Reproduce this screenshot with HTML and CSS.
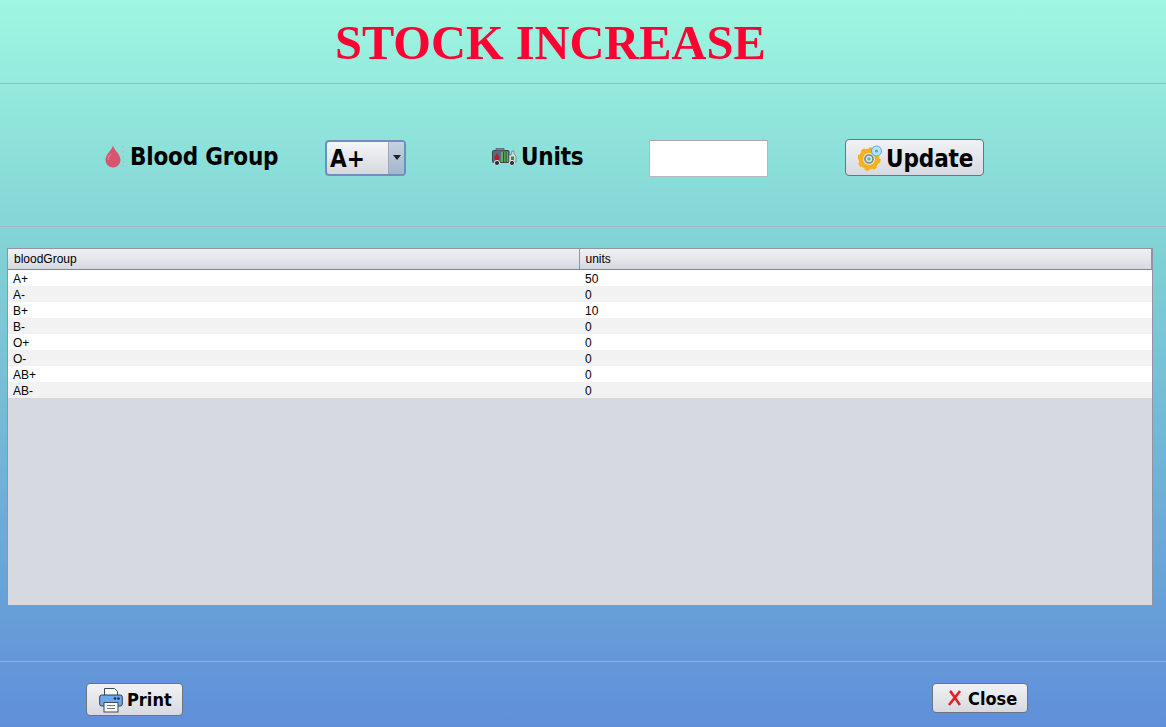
FILE: index.html
```html
<!DOCTYPE html>
<html lang="en">
<head>
<meta charset="utf-8">
<title>Stock Increase</title>
<link rel="stylesheet" href="styles.css">
</head>
<body>
<div class="frame">
  <header class="head"><h1 class="title">STOCK INCREASE</h1></header>
  <section class="controls">
    <div class="field field-group">
      <svg class="ico-drop" width="26" height="26" viewBox="0 0 26 26"><path d="M8 1.500C6.500 7 .5 10 .5 16a7.500 7.500 0 0 0 15 0C15.500 10 9.500 7 8 1.500Z" fill="#d9546f"/><path d="M3 16c0-2 1-4 3-6" stroke="#e98a9c" fill="none"/><g fill="#a9c9c4"><rect x="17" y="2" width="2" height="2"/><rect x="17" y="7" width="2" height="2"/><rect x="17" y="12" width="2" height="2"/><rect x="17" y="17" width="2" height="2"/><rect x="17" y="21" width="2" height="2"/></g></svg>
      <span class="label">Blood Group</span>
    </div>
    <div class="combo"><span class="combo-val">A+</span><span class="combo-arrow"><svg width="8" height="5" viewBox="0 0 8 5"><path d="M0 0h8L4 5Z" fill="#222"/></svg></span></div>
    <div class="field field-units">
      <svg class="ico-truck" width="25" height="18" viewBox="0 0 25 18"><rect x=".5" y="2.500" width="16.500" height="12" rx="1" fill="#5c6a7a" stroke="#3c4652"/><rect x="4" y=".5" width="8" height="2" fill="#78848f" stroke="#48525c" stroke-width=".6"/><path d="M5 5C4 7 2.500 8.500 2.500 10a2.500 2.500 0 0 0 5 0C7.500 8.500 6 7 5 5Z" fill="#b01e2a"/><rect x="9" y="4" width="7" height="10" fill="#5fb060"/><rect x="11" y="4" width="1.200" height="10" fill="#23602f"/><rect x="13.500" y="4" width="1.200" height="10" fill="#23602f"/><path d="M17 7h2l1-4h2v3l2 2v6h-7Z" fill="#d6dcdc" stroke="#59636a" stroke-width=".6"/><rect x="19" y="8.500" width="3" height="4" fill="#2f8a4e"/><circle cx="5" cy="15" r="2.600" fill="#2e3338" stroke="#e2e5e5"/><circle cx="20" cy="15" r="2.600" fill="#2e3338" stroke="#e2e5e5"/></svg>
      <span class="label">Units</span>
    </div>
    <div class="text-input"></div>
    <button class="btn btn-update" type="button">
      <svg width="25" height="26" viewBox="0 0 25 26"><circle cx="11" cy="14" r="8" fill="none" stroke="#f5b21d" stroke-width="5"/><circle cx="11" cy="14" r="10.500" fill="none" stroke="#f5b21d" stroke-width="2.500" stroke-dasharray="4 4.200"/><circle cx="11" cy="14" r="6" fill="#e4e6e4"/><circle cx="11" cy="14" r="4" fill="none" stroke="#7f8a86" stroke-width="1.700"/><circle cx="11" cy="14" r="1.700" fill="#3cc2a8"/><circle cx="18.500" cy="6" r="5" fill="#b8e2f6" stroke="#4eabe0"/><circle cx="18.500" cy="6" r="1.600" fill="#4eabe0"/></svg>
      <span>Update</span>
    </button>
  </section>
  <section class="grid-wrap">
    <div class="grid">
      <table class="tbl">
        <thead><tr><th class="col-a">bloodGroup</th><th>units</th></tr></thead>
        <tbody>
          <tr><td>A+</td><td>50</td></tr>
          <tr><td>A-</td><td>0</td></tr>
          <tr><td>B+</td><td>10</td></tr>
          <tr><td>B-</td><td>0</td></tr>
          <tr><td>O+</td><td>0</td></tr>
          <tr><td>O-</td><td>0</td></tr>
          <tr><td>AB+</td><td>0</td></tr>
          <tr><td>AB-</td><td>0</td></tr>
        </tbody>
      </table>
    </div>
  </section>
  <footer class="foot">
    <button class="btn btn-print" type="button">
      <svg width="24" height="26" viewBox="0 0 24 26"><path d="M5.500 1.500h10l3 3V10h-13Z" fill="#f6f6f2" stroke="#3f4a55"/><rect x=".7" y="8" width="22.600" height="11" rx="2" fill="#6ea8ea" stroke="#33404f"/><circle cx="16" cy="11.500" r="1.300" fill="#1f2e44"/><circle cx="19.500" cy="11.500" r="1.300" fill="#1f2e44"/><rect x="5" y="15.500" width="14" height="9.500" fill="#f6f6f2" stroke="#3f4a55"/><path d="M8 18.500h8M8 21.500h8" stroke="#6c7680"/></svg>
      <span>Print</span>
    </button>
    <button class="btn btn-close" type="button">
      <svg width="14" height="16" viewBox="0 0 14 16"><path d="M2 1c3 3 6 9 10 14M12 1C9 5 5 10 1 15" stroke="#ee1c25" stroke-width="2.600" fill="none"/></svg>
      <span>Close</span>
    </button>
  </footer>
</div>
</body>
</html>
```
FILE: styles.css
```css
* { box-sizing: border-box; }
html, body { margin: 0; height: 100%; }
body { overflow: hidden; }
.frame {
  width: 1166px;
  height: 727px;
  display: flex;
  flex-direction: column;
  background: linear-gradient(180deg, #9ff7e0 0%, #7fd0d5 36%, #5f8fd9 100%);
  font-family: "DejaVu Sans", sans-serif;
}
.head {
  height: 84px;
  border-bottom: 1px solid #85c4c6;
  padding-left: 335px;
  flex: none;
}
.title {
  margin: 0;
  padding-top: 15px;
  font: bold 48.400px/56px "Liberation Serif", serif;
  color: #ff0033;
}
.controls {
  height: 143px;
  flex: none;
  border-bottom: 1px solid #a9b4c6;
  display: flex;
  align-items: flex-start;
  padding-top: 55px;
}
.field { display: flex; align-items: center; }
.label {
  font-weight: bold;
  font-size: 24px;
  font-stretch: condensed;
  letter-spacing: -0.2px;
  color: #000;
  line-height: 32px;
}
.field-group { margin-left: 105px; width: 220px; padding-top: 2px; }
.ico-drop { margin-right: -1px; }
.combo {
  width: 81px;
  height: 36px;
  margin-top: 1px;
  border: 2px solid #6f8fc0;
  border-radius: 4px;
  background: linear-gradient(180deg, #f4f5f8, #d6d9e0);
  display: flex;
}
.combo-val {
  flex: 1;
  padding-left: 3px;
  font-weight: bold;
  font-size: 24px;
  font-stretch: condensed;
  line-height: 35px;
  color: #000;
}
.combo-arrow {
  width: 16px;
  background: linear-gradient(180deg, #c6d2e0, #a2b6cc);
  border-left: 1px solid #9aa8ba;
  display: flex;
  align-items: center;
  justify-content: center;
  padding-bottom: 2px;
}
.field-units { margin-left: 87px; width: 156px; padding-top: 2px; }
.ico-truck { margin-right: 4px; margin-left: -1px; }
.text-input {
  width: 119px;
  height: 37px;
  background: #fff;
  border: 1px solid #b4b9bd;
  border-top-color: #a8abae;
  margin-top: 1px;
}
.btn {
  display: flex;
  align-items: center;
  padding: 0;
  border: 1px solid #6c7480;
  border-radius: 4px;
  background: linear-gradient(180deg, #f1f2f5 0%, #e4e6ea 50%, #d6d9e0 100%);
  font-family: "DejaVu Sans", sans-serif;
  font-weight: bold;
  font-stretch: condensed;
  color: #000;
}
.btn-update {
  width: 139px;
  height: 37px;
  margin-left: 77px;
  padding: 0 0 0 12px;
  font-size: 24px;
  gap: 3px;
  line-height: 34px;
  letter-spacing: -0.1px;
}
.btn-update span { padding-top: 2px; }
.grid-wrap {
  height: 435px;
  flex: none;
  border-bottom: 1px solid #8fb4e4;
  padding: 21px 13px 0 7px;
}
.grid {
  height: 358px;
  background: #d6d9e0;
  border: 1px solid #8f96a2;
  overflow: hidden;
}
.tbl {
  width: 100%;
  table-layout: fixed;
  border-collapse: collapse;
  font: 12px/16px "Liberation Sans", sans-serif;
  color: #000;
}
.tbl th {
  height: 20px;
  padding: 0 6px;
  text-align: left;
  font-weight: normal;
  border-bottom: 1px solid #7f8690;
  border-right: 1px solid #8f96a2;
  background: linear-gradient(180deg, #eff0f3 0%, #e4e6ea 50%, #d5d8e0 100%);
}
.col-a { width: 571px; }
.tbl td {
  height: 16px;
  padding: 2px 5px 0;
  line-height: 14px;
  background: #fff;
}
.tbl td + td { padding-left: 6px; }
.tbl tr:nth-child(even) td { background: #f2f2f2; }
.foot {
  flex: 1;
  display: flex;
  align-items: flex-start;
}
.btn-print {
  width: 97px;
  height: 33px;
  margin: 21px 0 0 86px;
  padding-left: 12px;
  font-size: 18px;
  gap: 4px;
}
.btn-close {
  width: 96px;
  height: 30px;
  margin: 21px 0 0 749px;
  padding-left: 15px;
  font-size: 18px;
  gap: 6px;
}
```
